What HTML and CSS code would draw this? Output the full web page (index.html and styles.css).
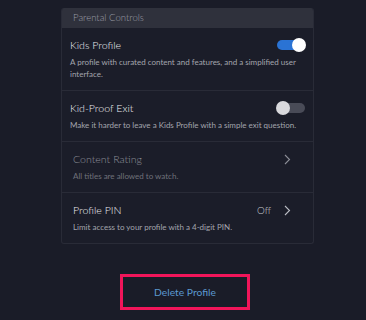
FILE: index.html
```html
<!DOCTYPE html>
<html>
<head>
<meta charset="utf-8">
<link rel="stylesheet" href="styles.css">
</head>
<body>
<div class="page">
  <div class="card">
    <div class="card-header">Parental Controls</div>
    <div class="row">
      <div class="row-main">
        <div class="title">Kids Profile</div>
        <div class="toggle on"><span class="knob"></span></div>
      </div>
      <div class="desc">A profile with curated content and features, and a simplified user interface.</div>
    </div>
    <div class="row">
      <div class="row-main">
        <div class="title">Kid-Proof Exit</div>
        <div class="toggle"><span class="knob"></span></div>
      </div>
      <div class="desc">Make it harder to leave a Kids Profile with a simple exit question.</div>
    </div>
    <div class="row row-inset disabled">
      <div class="row-main">
        <div class="title">Content Rating</div>
        <svg class="chev" width="7" height="11" viewBox="0 0 7 11"><path d="M1 1 L5.5 5.5 L1 10" fill="none" stroke="currentColor" stroke-width="1.1"/></svg>
      </div>
      <div class="desc">All titles are allowed to watch.</div>
    </div>
    <div class="row row-inset">
      <div class="row-main">
        <div class="title">Profile PIN</div>
        <div class="trail"><span class="value">Off</span><svg class="chev" width="7" height="11" viewBox="0 0 7 11"><path d="M1 1 L5.5 5.5 L1 10" fill="none" stroke="currentColor" stroke-width="1.1"/></svg></div>
      </div>
      <div class="desc">Limit access to your profile with a 4-digit PIN.</div>
    </div>
  </div>
  <div class="delete-wrap">
    <div class="delete">Delete Profile</div>
  </div>
</div>
</body>
</html>
```

FILE: styles.css
```css
html, body {
  margin: 0;
  padding: 0;
  background: #1a1c28;
  font-family: Lato, "Noto Sans", sans-serif;
}
.page {
  width: 366px;
  height: 320px;
  padding-top: 8px;
  box-sizing: border-box;
}
.card {
  margin-left: 61px;
  width: 253px;
  box-sizing: border-box;
  border: 1px solid #292b37;
  border-top: none;
  border-radius: 3px;
  background: #1b1d29;
  overflow: hidden;
}
.card-header {
  height: 20px;
  line-height: 20px;
  background: #2f313c;
  color: #9b9da6;
  font-size: 9.6px;
  font-weight: 300;
  padding-left: 11px;
}
.row {
  padding: 8px 8px 10px 8px;
  border-bottom: 1px solid #292b37;
}
.row:last-child {
  border-bottom: none;
}
.row-inset {
  padding-left: 11px;
}
.row-main {
  display: flex;
  align-items: center;
  justify-content: space-between;
  height: 18px;
}
.title {
  font-size: 10.6px;
  font-weight: 300;
  color: #eceef2;
}
.desc {
  margin-top: 2px;
  font-size: 8px;
  line-height: 12px;
  color: #a3a5ad;
}
.disabled .title {
  color: #8d8f98;
}
.disabled .desc {
  color: #6f717a;
}
.toggle {
  position: relative;
  width: 28px;
  height: 10px;
  border-radius: 5px;
  background: #494b57;
}
.toggle.on {
  background: #2a73d4;
}
.knob {
  position: absolute;
  top: -2px;
  left: -1px;
  width: 14px;
  height: 14px;
  border-radius: 50%;
  background: #d9d9dd;
}
.toggle.on .knob {
  left: auto;
  right: -1px;
  background: #ffffff;
}
.chev {
  color: #8a8c95;
  margin-right: 14px;
  display: block;
}
.row:not(.disabled) .chev {
  color: #b8bac2;
}
.trail {
  display: flex;
  align-items: center;
}
.value {
  font-size: 9.8px;
  font-weight: 300;
  color: #c7c8ce;
  margin-right: 13px;
}
.delete-wrap {
  margin-top: 30px;
  margin-left: 120px;
}
.delete {
  width: 130px;
  height: 36px;
  box-sizing: border-box;
  border: 3.5px solid #f1155a;
  display: flex;
  align-items: center;
  justify-content: center;
  color: #5a98cf;
  font-size: 10.3px;
}
```
